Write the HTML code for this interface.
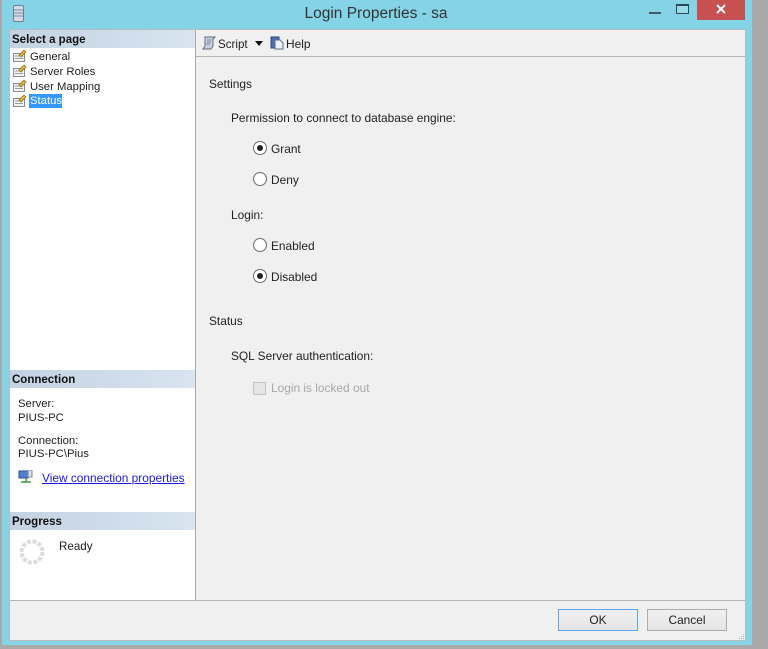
<!DOCTYPE html>
<html><head><meta charset="utf-8"><style>
html,body{margin:0;padding:0;width:768px;height:649px;overflow:hidden;background:#a9a9a9}
body{position:relative;font:11.9px/14px "Liberation Sans",sans-serif;color:#222}
div,span,a,svg{position:absolute}
.t{white-space:nowrap}
.l{font-size:11.3px}
.hd{left:10px;width:185px;height:18px;background:linear-gradient(90deg,#c3d2e2,#d8e4f0);font-weight:bold;font-size:11.5px;color:#111;line-height:20px;text-indent:2px}
.r{width:12px;height:12px;border:1px solid #6e6e6e;border-radius:50%;background:#fff;left:253px}
.r i{position:absolute;left:3px;top:3px;width:6px;height:6px;border-radius:50%;background:#222}
.btn{top:609px;height:20px;width:78px;text-align:center;line-height:21px;background:linear-gradient(#f0f0f0,#e5e5e5);border:1px solid #acacac}
</style></head><body>
<div style="left:2px;top:0;width:750px;height:645px;background:#85d3e6"></div>
<div style="left:9px;top:29px;width:735px;height:610px;background:#f0f0f0;border:1px solid #b5bcc0"></div>
<div style="left:10px;top:30px;width:185px;height:570px;background:#fff;border-right:1px solid #a8a8a8"></div>
<div style="left:196px;top:30px;width:549px;height:26px;background:#f0f0f0;border-bottom:1px solid #b4b4b4"></div>
<div style="left:10px;top:600px;width:735px;height:1px;background:#b4b4b4"></div>

<svg style="left:13px;top:5px" width="12" height="18" viewBox="0 0 12 18"><rect x=".5" y=".5" width="10" height="16" rx="1.5" fill="#d5dce8" stroke="#6f7f92"/><path d="M1 5h9M1 8h9M1 11h9" stroke="#7f8da0"/></svg>
<div class="t" style="left:0;top:5px;width:752px;text-align:center;font-size:15.5px;line-height:18px;color:#333">Login Properties - sa</div>
<div style="left:649px;top:12px;width:12px;height:2px;background:#3f5a66"></div>
<div style="left:676px;top:4px;width:11px;height:7px;border:1px solid #2c4a55;border-top-width:2px;background:#9adbea"></div>
<div style="left:697px;top:0;width:48px;height:20px;background:#c75050"></div>
<svg style="left:715px;top:4px" width="12" height="10" viewBox="0 0 12 10"><path d="M2 1l8 8M10 1l-8 8" stroke="#fff" stroke-width="2"/></svg>

<div class="hd" style="top:30px">Select a page</div>
<svg width="0" height="0"><defs><g id="ic"><rect x=".5" y="4.500" width="11" height="8" fill="#f4f4f4" stroke="#8a8a8a"/><path d="M2 7h8M2 9.500h8" stroke="#9a9a9a"/><path d="M6 6l5-5 2 2-5 5z" fill="#e3b23c" stroke="#8d6a18" stroke-width=".7"/></g></defs></svg>
<svg style="left:13px;top:49px" width="14" height="14"><use href="#ic"/></svg>
<svg style="left:13px;top:64px" width="14" height="14"><use href="#ic"/></svg>
<svg style="left:13px;top:79px" width="14" height="14"><use href="#ic"/></svg>
<svg style="left:13px;top:94px" width="14" height="14"><use href="#ic"/></svg>
<div class="t l" style="left:30px;top:50px">General</div>
<div class="t l" style="left:30px;top:65px">Server Roles</div>
<div class="t l" style="left:30px;top:80px">User Mapping</div>
<div class="t l" style="left:29px;top:94px;width:33px;height:14px;line-height:15px;background:#3399ff;color:#fff;text-indent:1px">Status</div>

<div class="hd" style="top:370px">Connection</div>
<div class="t l" style="left:18px;top:397px">Server:</div>
<div class="t l" style="left:18px;top:411px">PIUS-PC</div>
<div class="t l" style="left:18px;top:434px">Connection:</div>
<div class="t l" style="left:18px;top:447px">PIUS-PC\Pius</div>
<svg style="left:18px;top:470px" width="15" height="14" viewBox="0 0 15 14"><rect x="1" y="1" width="9" height="7" fill="#4f7fd0" stroke="#33508c"/><rect x="10" y="0" width="4" height="7" fill="#dde" stroke="#889"/><path d="M3 12h10M8 8v4" stroke="#3f9a3f" stroke-width="1.500"/></svg>
<div class="t" style="left:42px;top:471px;color:#1a1ae6;text-decoration:underline">View connection properties</div>

<div class="hd" style="top:512px">Progress</div>
<svg style="left:19px;top:539px" width="26" height="26" viewBox="0 0 26 26"><circle cx="13" cy="13" r="10.500" fill="none" stroke="#dcdcdc" stroke-width="4" stroke-dasharray="4 1.500"/></svg>
<div class="t l" style="left:59px;top:540px;font-size:11.6px">Ready</div>

<svg style="left:202px;top:36px" width="14" height="14" viewBox="0 0 14 14"><path d="M3 1h10l-2 2v7l-2 3H1l2-3z" fill="#c9d2df" stroke="#5d6c80"/><path d="M5 4h4M5 6h4M4 8h4" stroke="#5d6c80" stroke-width=".8"/></svg>
<div class="t" style="left:218px;top:38px;font-size:11.6px">Script</div>
<div style="left:255px;top:41px;width:0;height:0;border:4.500px solid transparent;border-top:5px solid #111;border-bottom:0"></div>
<svg style="left:270px;top:36px" width="14" height="14" viewBox="0 0 14 14"><rect x="1" y="1" width="8" height="11" fill="#4a6fb5" stroke="#2e4a80"/><path d="M5 4h5l3 3v6H5z" fill="#eef1f6" stroke="#5d6c80"/></svg>
<div class="t" style="left:286px;top:37px">Help</div>

<div class="t" style="left:209px;top:77px">Settings</div>
<div class="t" style="left:231px;top:111px">Permission to connect to database engine:</div>
<div class="r" style="top:141px"><i></i></div><div class="t" style="left:271px;top:142px">Grant</div>
<div class="r" style="top:172px"></div><div class="t" style="left:271px;top:173px">Deny</div>
<div class="t" style="left:231px;top:208px">Login:</div>
<div class="r" style="top:238px"></div><div class="t" style="left:271px;top:239px">Enabled</div>
<div class="r" style="top:269px"><i></i></div><div class="t" style="left:271px;top:270px">Disabled</div>
<div class="t" style="left:209px;top:314px">Status</div>
<div class="t" style="left:231px;top:349px">SQL Server authentication:</div>
<div style="left:253px;top:382px;width:11px;height:11px;background:#e6e6e6;border:1px solid #c4c4c4"></div>
<div class="t" style="left:271px;top:381px;color:#a8a8a8">Login is locked out</div>

<div class="btn" style="left:558px;border-color:#5aa6e8">OK</div>
<div class="btn" style="left:647px">Cancel</div>
<svg style="left:739px;top:634px" width="6" height="6"><path d="M4 0h1v1H4zM2 2h1v1H2zM4 2h1v1H4zM0 4h1v1H0zM2 4h1v1H2zM4 4h1v1H4z" fill="#bdbdbd"/></svg>
</body></html>
